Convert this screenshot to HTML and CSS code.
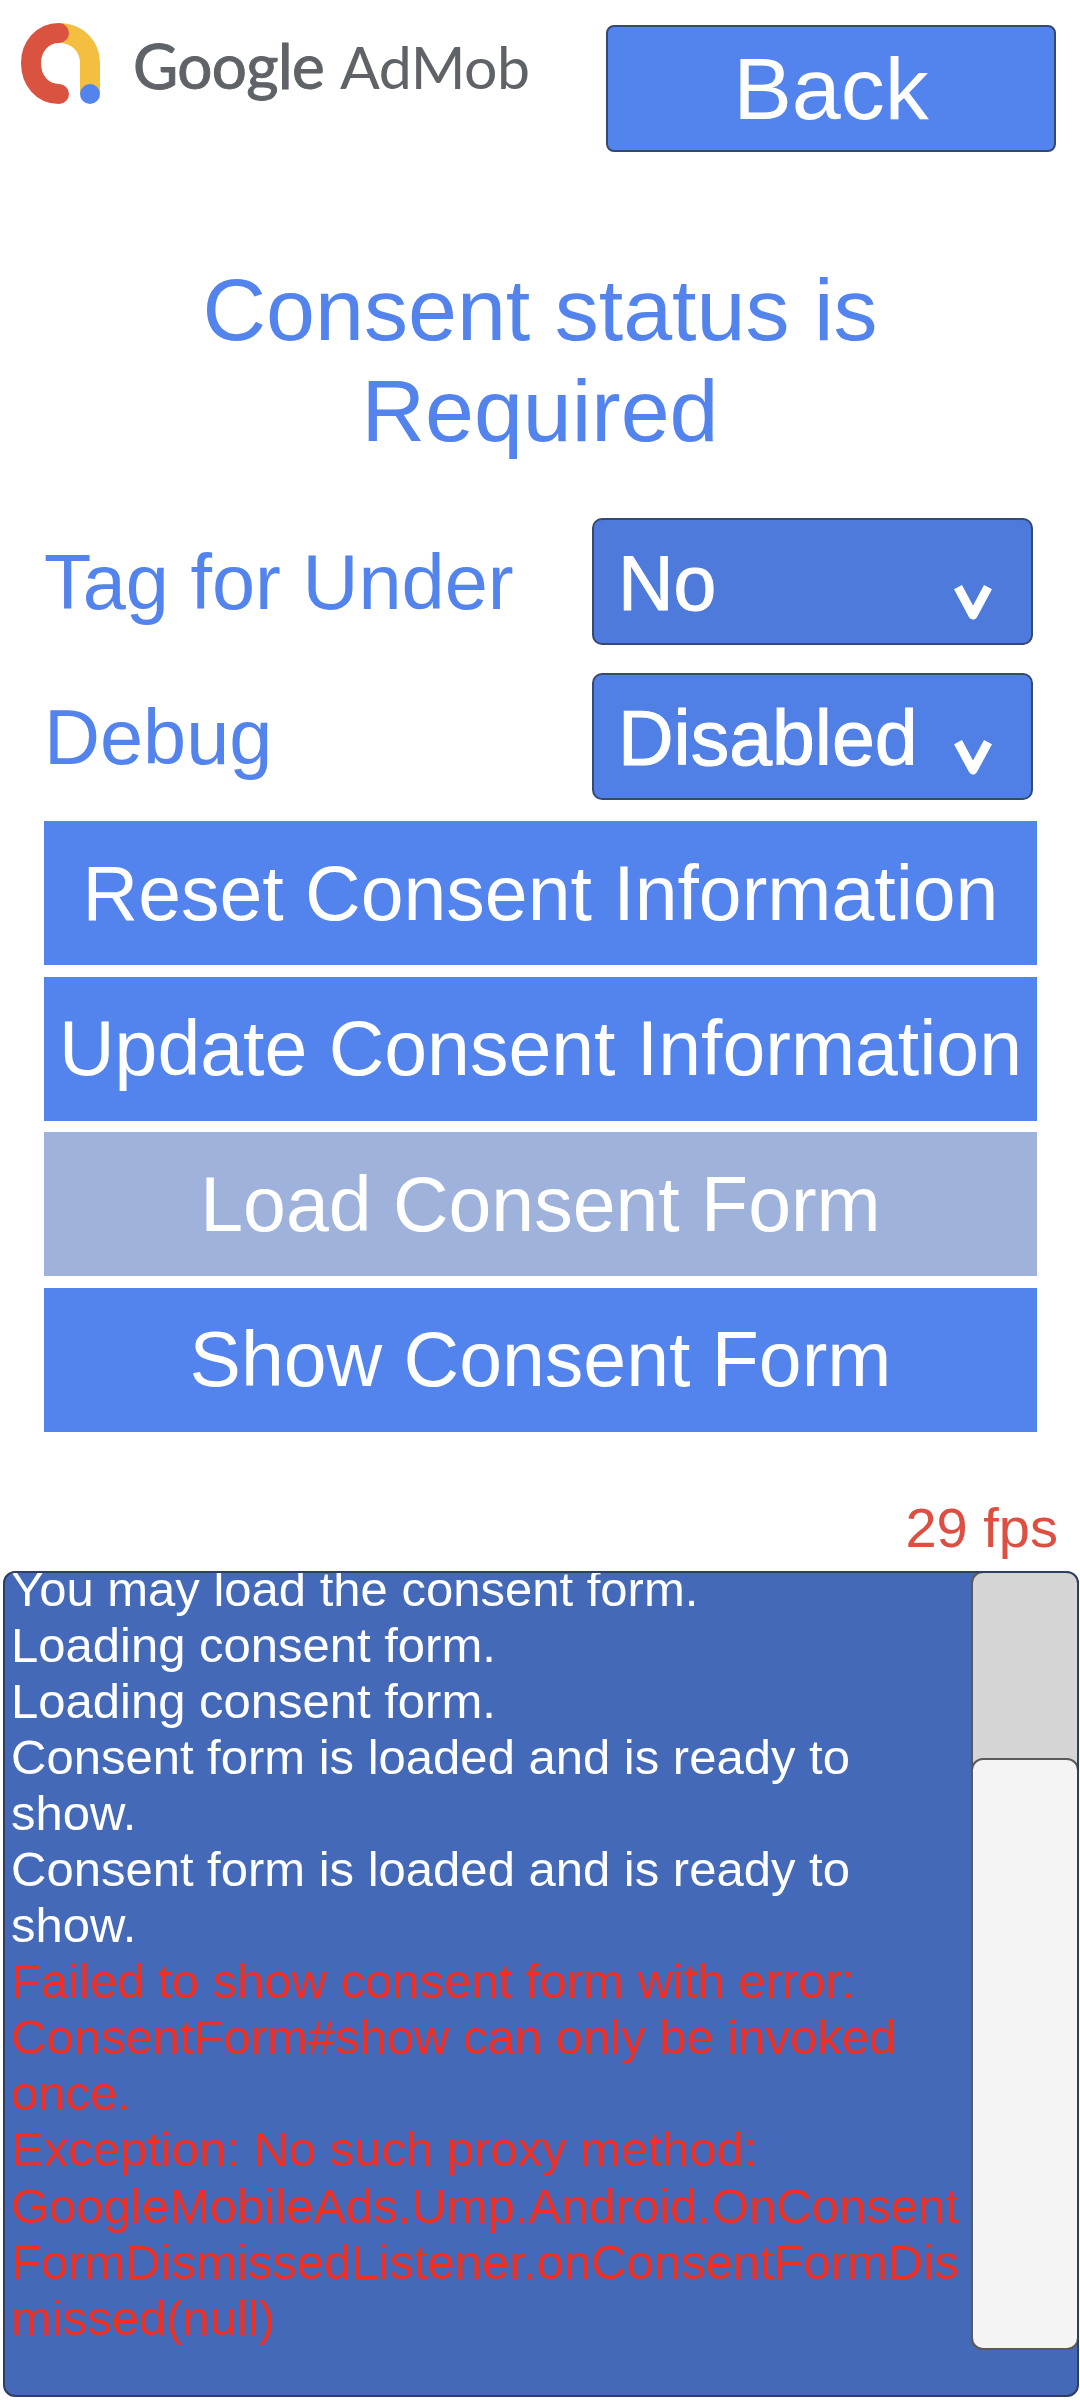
FILE: index.html
```html
<!DOCTYPE html>
<html lang="en">
<head>
<meta charset="utf-8">
<title>Google AdMob Consent</title>
<link rel="stylesheet" href="styles.css">
</head>
<body>
<header class="top">
  <div class="logo">
    <svg class="mark" viewBox="0 0 84 84" width="84" height="84" aria-hidden="true">
      <path d="M39 11 C58 11 70 25 70 41 V72" fill="none" stroke="#f4be41" stroke-width="20"/>
      <path d="M39 11 C22 11 11 25 11 41 C11 58 22 72 39 72" fill="none" stroke="#da5240" stroke-width="20" stroke-linecap="round"/>
      <circle cx="70" cy="72" r="10" fill="#5383ec"/>
    </svg>
    <span class="brand"><span class="brand-g">Google</span><span class="brand-a">AdMob</span></span>
  </div>
  <button class="back">Back</button>
</header>
<h1 class="title">Consent status is<br>Required</h1>
<section class="options">
  <div class="row">
    <span class="label">Tag for Under</span>
    <div class="select select-dark"><span class="value">No</span><svg class="chev" viewBox="0 0 38 36" width="38" height="36" aria-hidden="true"><path d="M4 3 L19 31 L34 3" fill="none" stroke="#fff" stroke-width="9" stroke-linejoin="round"/></svg></div>
  </div>
  <div class="row">
    <span class="label">Debug</span>
    <div class="select"><span class="value">Disabled</span><svg class="chev" viewBox="0 0 38 36" width="38" height="36" aria-hidden="true"><path d="M4 3 L19 31 L34 3" fill="none" stroke="#fff" stroke-width="9" stroke-linejoin="round"/></svg></div>
  </div>
</section>
<section class="actions">
  <button class="action">Reset Consent Information</button>
  <button class="action">Update Consent Information</button>
  <button class="action action-off">Load Consent Form</button>
  <button class="action">Show Consent Form</button>
</section>
<div class="fps">29 fps</div>
<section class="log">
  <div class="log-text">
    <p>You may load the consent form.</p>
    <p>Loading consent form.</p>
    <p>Loading consent form.</p>
    <p>Consent form is loaded and is ready to show.</p>
    <p>Consent form is loaded and is ready to show.</p>
    <p class="err">Failed to show consent form with error: ConsentForm#show can only be invoked once.</p>
    <p class="err">Exception: No such proxy method: GoogleMobileAds.Ump.Android.OnConsentFormDismissedListener.onConsentFormDismissed(null)</p>
  </div>
  <div class="track"><div class="thumb"></div></div>
</section>
</body>
</html>
```
FILE: styles.css
```css
* { box-sizing: border-box; }
html, body { margin: 0; padding: 0; }
body { width: 1080px; height: 2400px; background: #fff; font-family: "Liberation Sans", Arial, sans-serif; overflow: hidden; }
p { margin: 0; }
button { font-family: inherit; border: 0; padding: 0; color: #fff; }

.top { display: flex; justify-content: space-between; align-items: flex-start; padding: 25px 24px 0 20px; height: 152px; }
.logo { display: flex; align-items: flex-start; gap: 29px; margin-top: -3px; }
.mark { display: block; }
.brand { display: flex; gap: 16px; align-items: baseline; font-family: "Lato", sans-serif; line-height: 84px; color: #5f6368; white-space: nowrap; margin-top: 1px; }
.brand-g { font-size: 62px; font-weight: 400; letter-spacing: -0.6px; -webkit-text-stroke: 1px #5f6368; }
.brand-a { font-size: 59px; font-weight: 400; letter-spacing: -0.6px; }
.back { width: 450px; height: 127px; background: #5383ec; border: 2px solid #38496f; border-radius: 8px; font-size: 88px; line-height: 1; }

.title { margin: 107px 0 0; font-weight: 400; font-size: 88px; line-height: 101px; color: #5383ec; text-align: center; }

.options { display: flex; flex-direction: column; gap: 28px; margin-top: 57px; padding: 0 47px 0 44px; }
.row { display: flex; justify-content: space-between; align-items: center; }
.label { padding-top: 2px; font-size: 77.5px; line-height: 125px; color: #5383ec; }
.select { width: 441px; height: 127px; display: flex; justify-content: space-between; align-items: center; padding: 0 39px 0 24px; background: #5080e6; border: 2px solid #38496f; border-radius: 10px; color: #fff; font-size: 77px; -webkit-text-stroke: 1px #fff; }
.value { margin-top: 3px; }
.select-dark { background: #4d7adb; }
.chev { display: block; margin-top: 40px; }

.actions { display: flex; flex-direction: column; gap: 11.5px; margin: 21px 43px 0 44px; }
.action { height: 144px; background: #5383ec; font-size: 77px; white-space: nowrap; }
.action-off { background: #9fb2dc; }

.fps { margin-top: 62px; padding-right: 22px; text-align: right; font-size: 56px; line-height: 68px; color: #dd4f40; }

.log { display: flex; align-items: flex-start; justify-content: space-between; height: 826px; margin: 9px 1px 0 3px; background: #4469b8; border: 2px solid #2f3f62; border-radius: 12px; overflow: hidden; }
.log-text { width: 960px; margin-top: -12px; padding-left: 6px; font-size: 49px; line-height: 56.1px; color: #fff; overflow-wrap: anywhere; }
.err { color: #ee3124; }
.track { flex: none; width: 108px; height: 779px; margin-top: -2px; margin-right: -2px; padding-top: 185px; background: #d5d5d5; border: 2px solid #5a5a5a; border-radius: 12px; }
.thumb { height: 592px; margin: 0 -2px; background: #f4f4f4; border: 2px solid #5a5a5a; border-radius: 12px; }
```
